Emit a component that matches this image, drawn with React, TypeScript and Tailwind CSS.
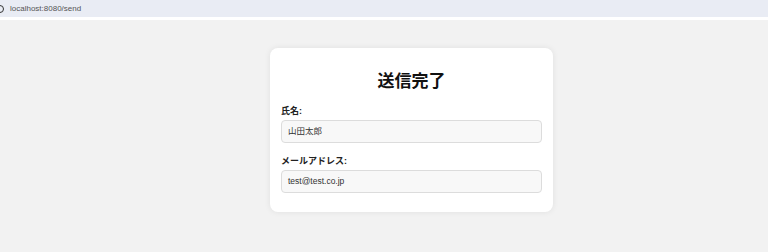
import React from 'react';

const font = { fontFamily: '"Liberation Sans", "Noto Sans CJK JP", sans-serif' };

const Field: React.FC<{ label: string; value: string }> = ({ label, value }) => (
  <div className="flex flex-col">
    <label className="text-[9px] leading-[12px] font-bold text-[#222] mb-[3px]">{label}</label>
    <div className="h-[23px] flex items-center px-[6px] bg-[#f8f8f8] border border-[#dcdcdc] rounded-[4px] text-[8.5px] text-[#333]">
      {value}
    </div>
  </div>
);

export default function App() {
  return (
    <div className="w-[768px] h-[252px] bg-[#f2f2f2] overflow-hidden" style={font}>
      <div className="h-[17px] bg-[#e9ecf4] flex items-center">
        <span className="-ml-[4px] w-[8px] h-[8px] rounded-full border border-[#333]" />
        <span className="ml-[6px] text-[8px] text-[#555]">localhost:8080/send</span>
      </div>
      <div className="h-[3px] bg-white" />
      <div className="pt-[28px] pl-[270px]">
        <div className="w-[283px] bg-white rounded-[8px] shadow-[0_0_6px_rgba(0,0,0,0.08)] px-[11px] pt-[24px] pb-[19px]">
          <h1 className="text-[17px] leading-[20px] font-bold text-center text-[#111] mb-[13px]">送信完了</h1>
          <div className="flex flex-col gap-[12px]">
            <Field label="氏名:" value="山田太郎" />
            <Field label="メールアドレス:" value="test@test.co.jp" />
          </div>
        </div>
      </div>
    </div>
  );
}
